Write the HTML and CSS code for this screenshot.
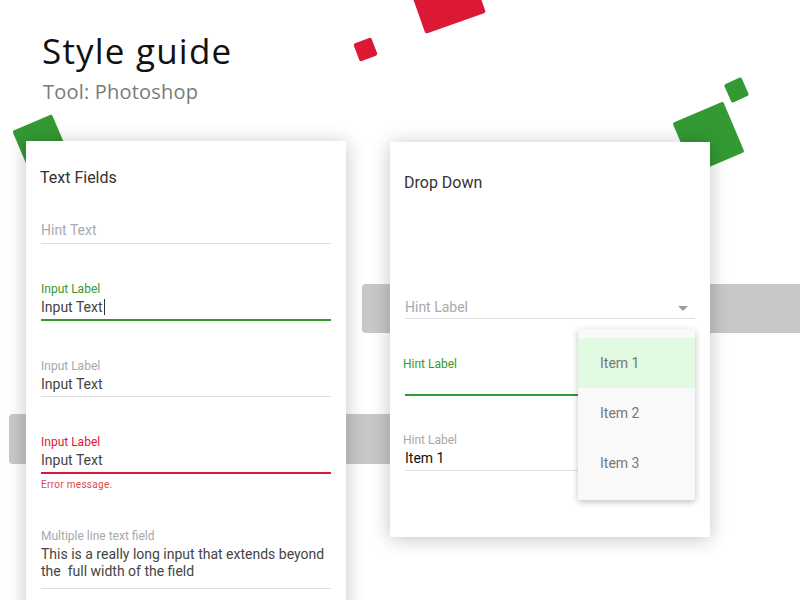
FILE: index.html
```html
<!DOCTYPE html>
<html lang="en">
<head>
<meta charset="utf-8">
<title>Style guide</title>
<link rel="stylesheet" href="styles.css">
</head>
<body>
<div class="page">
  <div class="deco">
    <div class="shape red-big"></div>
    <div class="shape red-small"></div>
    <div class="shape green-left"></div>
    <div class="shape green-big"></div>
    <div class="shape green-small"></div>
    <div class="bar bar-right"></div>
    <div class="bar bar-left"></div>
  </div>

  <header class="header">
    <h1 class="title">Style guide</h1>
    <p class="subtitle">Tool: Photoshop</p>
  </header>

  <main class="cards">
    <section class="card card-text">
      <h2 class="card-title">Text Fields</h2>

      <div class="field field-hint">
        <div class="value hint">Hint Text</div>
      </div>

      <div class="field field-focus">
        <div class="label label-green">Input Label</div>
        <div class="value">Input Text<span class="caret"></span></div>
      </div>

      <div class="field">
        <div class="label">Input Label</div>
        <div class="value">Input Text</div>
      </div>

      <div class="field field-error">
        <div class="label label-red">Input Label</div>
        <div class="value">Input Text</div>
      </div>
      <div class="error-msg">Error message.</div>

      <div class="field field-multi">
        <div class="label">Multiple line text field</div>
        <div class="value multi">This is a really long input that extends beyond the &nbsp;full width of the field</div>
      </div>
    </section>

    <section class="card card-drop">
      <h2 class="card-title drop-title">Drop Down</h2>

      <div class="field field-select">
        <div class="value hint">Hint Label</div>
        <span class="arrow"></span>
      </div>

      <div class="field field-focus field-open">
        <div class="label label-green shift">Hint Label</div>
        <div class="value"></div>
      </div>

      <div class="field field-chosen">
        <div class="label shift">Hint Label</div>
        <div class="value dark">Item 1</div>
      </div>

      <ul class="menu">
        <li class="menu-item active">Item 1</li>
        <li class="menu-item">Item 2</li>
        <li class="menu-item">Item 3</li>
      </ul>
    </section>
  </main>
</div>
</body>
</html>
```

FILE: styles.css
```css
* { box-sizing: border-box; }

html, body {
  margin: 0;
  padding: 0;
  background: #ffffff;
}

.page {
  position: relative;
  width: 800px;
  height: 600px;
  overflow: hidden;
  font-family: Roboto, "Liberation Sans", sans-serif;
}

/* decoration on a free canvas */
.deco {
  position: absolute;
  inset: 0;
  z-index: 0;
}

.shape {
  position: absolute;
  border-radius: 2px;
}

.red-big {
  width: 64px; height: 64px;
  left: 413px; top: -39px;
  background: #dc1935;
  transform: rotate(-19.5deg);
}

.red-small {
  width: 19px; height: 19px;
  left: 356px; top: 40px;
  background: #dc1935;
  transform: rotate(-21deg);
}

.green-left {
  width: 43px; height: 43px;
  left: 19px; top: 121px;
  background: #339933;
  transform: rotate(-23deg);
}

.green-big {
  width: 55px; height: 55px;
  left: 681px; top: 110px;
  background: #339933;
  transform: rotate(-23deg);
}

.green-small {
  width: 19px; height: 20px;
  left: 727px; top: 80px;
  background: #339933;
  transform: rotate(-24deg);
}

.bar {
  position: absolute;
  background: #c8c8c8;
  border-radius: 4px;
}

.bar-right {
  left: 362px; top: 284px;
  width: 460px; height: 49px;
}

.bar-left {
  left: 9px; top: 414px;
  width: 500px; height: 50px;
}

/* header */
.header {
  position: relative;
  z-index: 1;
  padding: 31px 0 0 42px;
}

.title {
  margin: 0;
  font-family: "Open Sans", sans-serif;
  font-weight: 400;
  font-size: 35px;
  line-height: 40px;
  letter-spacing: 1.2px;
  color: #111111;
}

.subtitle {
  margin: 9px 0 0 1px;
  font-family: "Open Sans", sans-serif;
  font-size: 20px;
  line-height: 24px;
  letter-spacing: 0.2px;
  color: #7a7a7a;
}

/* cards */
.cards {
  position: relative;
  z-index: 1;
  display: flex;
  align-items: flex-start;
  gap: 44px;
  margin-top: 37px;
  padding-left: 26px;
}

.card {
  position: relative;
  width: 320px;
  background: #ffffff;
  box-shadow: 0 2px 18px rgba(0, 0, 0, 0.24);
  padding: 27px 15px 40px 15px;
}

.card-text {
  height: 500px;
}

.card-drop {
  margin-top: 1px;
  height: 395px;
  padding-top: 31px;
}

.card-title {
  margin: 0 0 0 -1px;
  font-size: 16px;
  font-weight: 400;
  line-height: 20px;
  color: #333333;
}

.field {
  position: relative;
  border-bottom: 1px solid #e0e0e0;
  padding-bottom: 3px;
  margin-top: 38px;
}

.field-hint {
  margin-top: 33px;
  padding-bottom: 4px;
}

.field-focus {
  border-bottom: 2px solid #339933;
}

.field-error {
  margin-top: 38px;
  border-bottom: 2px solid #dc1935;
}

.label {
  font-size: 12px;
  line-height: 14px;
  color: #a8a8a8;
  margin-bottom: 2px;
}

.label-green { color: #339933; }
.label-red { color: #dc1935; }

.shift { margin-left: -2px; }

.value {
  font-size: 14px;
  line-height: 18px;
  height: 18px;
  color: #444444;
}

.value.hint { color: #aaaaaa; }
.value.dark { color: #111111; }

.caret {
  display: inline-block;
  width: 1px;
  height: 16px;
  background: #333333;
  vertical-align: -3px;
  margin-left: 1px;
}

.error-msg {
  margin-top: 5px;
  font-size: 10px;
  line-height: 12px;
  letter-spacing: 0.3px;
  color: #e0474c;
}

.field-multi {
  margin-top: 38px;
  padding-bottom: 8px;
}

.field-multi .label { margin-bottom: 3px; }

.value.multi {
  height: auto;
  line-height: 17px;
  padding-right: 4px;
}

/* dropdown card */
.field-select {
  margin-top: 105px;
  padding-bottom: 2px;
}

.arrow {
  position: absolute;
  right: 7px;
  top: 8px;
  width: 0;
  height: 0;
  border-left: 5px solid transparent;
  border-right: 5px solid transparent;
  border-top: 5px solid #9e9e9e;
}

.field-open { margin-top: 38px; }
.field-chosen { margin-top: 37px; }

.menu {
  position: absolute;
  left: 188px;
  top: 187px;
  width: 117px;
  height: 171px;
  margin: 0;
  padding: 9px 0 12px 0;
  list-style: none;
  background: #f9f9f9;
  border-radius: 2px;
  box-shadow: 0 2px 6px rgba(0, 0, 0, 0.25);
  z-index: 2;
}

.menu-item {
  height: 50px;
  line-height: 50px;
  padding-left: 22px;
  font-size: 14px;
  color: #777777;
}

.menu-item.active {
  background: #e2f9e2;
}
```
